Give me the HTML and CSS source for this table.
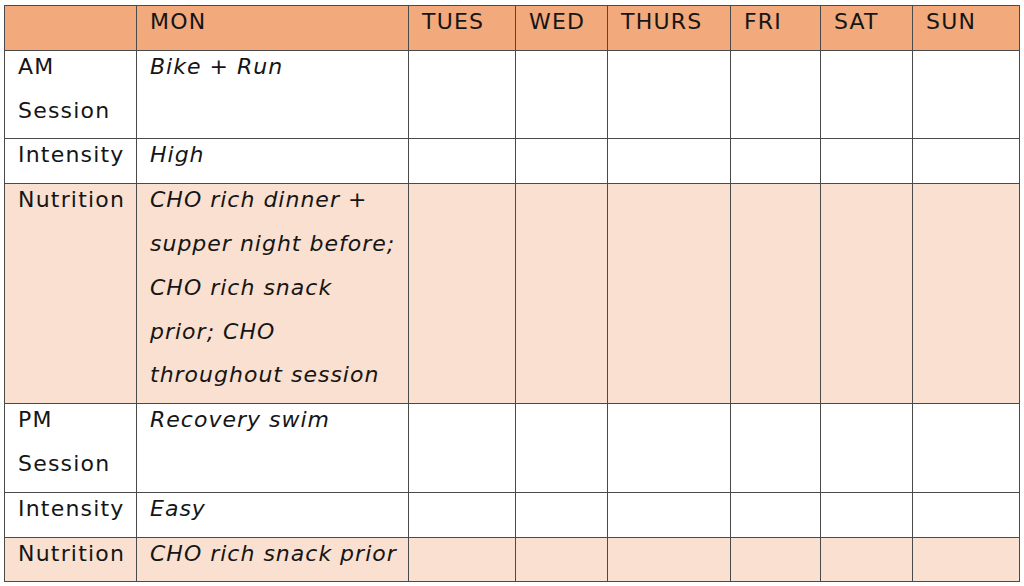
FILE: index.html
```html
<!DOCTYPE html>
<html>
<head>
<meta charset="utf-8">
<link rel="stylesheet" href="styles.css">
</head>
<body>
<table class="plan">
  <colgroup>
    <col class="c-label"><col class="c-mon"><col class="c-tue"><col class="c-wed"><col class="c-thu"><col class="c-fri"><col class="c-sat"><col class="c-sun">
  </colgroup>
  <thead>
    <tr class="head">
      <th><div class="t"></div></th>
      <th><div class="t">MON</div></th>
      <th><div class="t">TUES</div></th>
      <th><div class="t">WED</div></th>
      <th><div class="t">THURS</div></th>
      <th><div class="t">FRI</div></th>
      <th><div class="t">SAT</div></th>
      <th><div class="t">SUN</div></th>
    </tr>
  </thead>
  <tbody>
    <tr>
      <td><div class="t">AM<br>Session</div></td>
      <td class="it"><div class="t">Bike + Run</div></td>
      <td></td><td></td><td></td><td></td><td></td><td></td>
    </tr>
    <tr>
      <td><div class="t">Intensity</div></td>
      <td class="it"><div class="t">High</div></td>
      <td></td><td></td><td></td><td></td><td></td><td></td>
    </tr>
    <tr class="nut">
      <td><div class="t">Nutrition</div></td>
      <td class="it"><div class="t">CHO rich dinner +<br>supper night before;<br>CHO rich snack<br>prior; CHO<br>throughout session</div></td>
      <td></td><td></td><td></td><td></td><td></td><td></td>
    </tr>
    <tr>
      <td><div class="t">PM<br>Session</div></td>
      <td class="it"><div class="t">Recovery swim</div></td>
      <td></td><td></td><td></td><td></td><td></td><td></td>
    </tr>
    <tr>
      <td><div class="t">Intensity</div></td>
      <td class="it"><div class="t">Easy</div></td>
      <td></td><td></td><td></td><td></td><td></td><td></td>
    </tr>
    <tr class="nut">
      <td><div class="t">Nutrition</div></td>
      <td class="it"><div class="t">CHO rich snack prior</div></td>
      <td></td><td></td><td></td><td></td><td></td><td></td>
    </tr>
  </tbody>
</table>
</body>
</html>
```
FILE: styles.css
```css
html, body {
  margin: 0;
  padding: 0;
  background: #ffffff;
}
body {
  padding: 5px 0 0 4px;
  font-family: "DejaVu Sans", "Noto Sans", sans-serif;
  color: #151515;
}
.plan {
  border-collapse: collapse;
  table-layout: fixed;
  width: 1015px;
}
.c-label { width: 132px; }
.c-mon { width: 272px; }
.c-tue { width: 107px; }
.c-wed { width: 92px; }
.c-thu { width: 123px; }
.c-fri { width: 90px; }
.c-sat { width: 92px; }
.c-sun { width: 107px; }
.plan th, .plan td {
  border: 1px solid #4a4a4a;
  padding: 0 4px 0 13px;
  vertical-align: top;
  text-align: left;
  font-weight: normal;
  font-size: 22px;
  letter-spacing: 1.2px;
  line-height: 43.8px;
  height: 43.8px;
  white-space: nowrap;
}
.plan .t {
  margin-top: -6px;
  margin-bottom: 6px;
  min-height: 43.8px;
}
.head th {
  background: #f2a97b;
}
.nut td {
  background: #f9e0d0;
}
.plan .it {
  font-style: italic;
  letter-spacing: 1px;
}
```
